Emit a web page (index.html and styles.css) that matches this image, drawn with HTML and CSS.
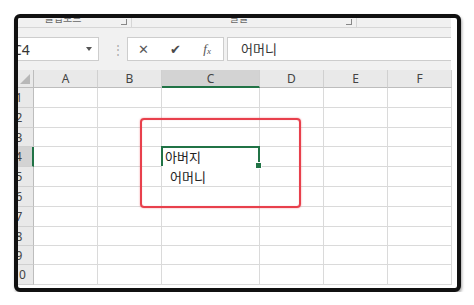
FILE: index.html
```html
<!doctype html>
<html lang="ko">
<head>
    <meta charset="UTF-8">
    <title>엑셀</title>
    <link rel="stylesheet" href="styles.css">
</head>
<body>
<div class="frame">
    <div class="screen">
        <div class="groups">
            <div class="group g1"><span class="group-name">클립보드</span><i class="launcher"></i></div>
            <div class="group g2"><span class="group-name">글꼴</span><i class="launcher"></i></div>
            <div class="group g3"></div>
        </div>
        <div class="fbar">
            <div class="namebox"><span>C4</span><i class="caret"></i></div>
            <div class="dots">⋮</div>
            <div class="fxbox">
                <span class="fbtn cancel">✕</span>
                <span class="fbtn enter">✔</span>
                <span class="fbtn fx">f<sub>x</sub></span>
            </div>
            <div class="finput">어머니</div>
        </div>
        <div class="sheet">
            <div class="hd corner"><i class="tri"></i></div>
            <div class="hd col">A</div>
            <div class="hd col">B</div>
            <div class="hd col on">C</div>
            <div class="hd col">D</div>
            <div class="hd col">E</div>
            <div class="hd col">F</div>

            <div class="hd row">1</div><div class="c"></div><div class="c"></div><div class="c"></div><div class="c"></div><div class="c"></div><div class="c"></div>
            <div class="hd row">2</div><div class="c"></div><div class="c"></div><div class="c"></div><div class="c"></div><div class="c"></div><div class="c"></div>
            <div class="hd row">3</div><div class="c"></div><div class="c"></div><div class="c"></div><div class="c"></div><div class="c"></div><div class="c"></div>
            <div class="hd row on">4</div><div class="c"></div><div class="c"></div><div class="c active">아버지</div><div class="c"></div><div class="c"></div><div class="c"></div>
            <div class="hd row">5</div><div class="c"></div><div class="c"></div><div class="c indent">어머니</div><div class="c"></div><div class="c"></div><div class="c"></div>
            <div class="hd row">6</div><div class="c"></div><div class="c"></div><div class="c"></div><div class="c"></div><div class="c"></div><div class="c"></div>
            <div class="hd row">7</div><div class="c"></div><div class="c"></div><div class="c"></div><div class="c"></div><div class="c"></div><div class="c"></div>
            <div class="hd row">8</div><div class="c"></div><div class="c"></div><div class="c"></div><div class="c"></div><div class="c"></div><div class="c"></div>
            <div class="hd row">9</div><div class="c"></div><div class="c"></div><div class="c"></div><div class="c"></div><div class="c"></div><div class="c"></div>
            <div class="hd row">10</div><div class="c"></div><div class="c"></div><div class="c"></div><div class="c"></div><div class="c"></div><div class="c"></div>
        </div>
    </div>
    <div class="mark"></div>
</div>
</body>
</html>
```

FILE: styles.css
```css
*{
    margin: 0;
    padding: 0;
    box-sizing: border-box;
}

body{
    background-color: #fff;
    font-family: "Noto Sans", "Noto Sans CJK KR", sans-serif;
    color: #333;
}

.frame{
    position: relative;
    width: 447px;
    height: 278px;
    margin: 14px 0 0 14px;
    border: 4px solid #111;
    border-radius: 6px;
    box-shadow: 1px 2px 3px rgba(0,0,0,.35);
    background-color: #fff;
    overflow: hidden;
}
.screen{
    width: 446px;
    margin-left: -13px;
}

/* 리본 그룹 이름 줄 */
.groups{
    display: flex;
    height: 15px;
    margin-top: -5px;
    background-color: #f1f1f1;
    border-bottom: 1px solid #d6d6d6;
}
.group{
    display: flex;
    align-items: center;
    border-right: 1px solid #d6d6d6;
}
.g1{ width: 127px; }
.g2{ width: 225px; }
.g3{ flex: 1; border-right: 0; }
.group-name{
    flex: 1;
    margin-top: -5px;
    text-align: center;
    font-family: "Noto Sans CJK KR", sans-serif;
    font-size: 10px;
    color: #666;
}
.launcher{
    width: 6px;
    height: 6px;
    margin: 4px 4px 0 0;
    border-right: 1px solid #888;
    border-bottom: 1px solid #888;
}

/* 수식 입력줄 */
.fbar{
    display: flex;
    align-items: center;
    height: 42px;
    background-color: #f1f1f1;
}
.namebox{
    display: flex;
    align-items: center;
    justify-content: space-between;
    width: 94px;
    height: 24px;
    padding: 0 6px 0 7px;
    background-color: #fff;
    border: 1px solid #cdcdcd;
    font-size: 14px;
    color: #333;
}
.caret{
    border-left: 3px solid transparent;
    border-right: 3px solid transparent;
    border-top: 4px solid #555;
}
.dots{
    width: 4px;
    margin-left: 13px;
    font-size: 12px;
    color: #aaa;
    text-align: center;
}
.fxbox{
    display: flex;
    width: 97px;
    height: 24px;
    margin-left: 11px;
    background-color: #fff;
    border: 1px solid #cdcdcd;
}
.fbtn{
    flex: 1;
    text-align: center;
    line-height: 22px;
    color: #5a5a5a;
}
.cancel{ font-size: 13px; }
.enter{ font-size: 13px; color: #4a4a4a; }
.fx{
    font-family: "Liberation Serif", serif;
    font-style: italic;
    font-size: 13px;
    color: #555;
}
.fx sub{
    font-size: 9px;
    vertical-align: -1px;
}
.finput{
    flex: 1;
    height: 24px;
    margin-left: 3px;
    padding-left: 13px;
    background-color: #fff;
    border: 1px solid #cdcdcd;
    border-right: 0;
    font-family: "Noto Sans CJK KR", sans-serif;
    font-size: 13px;
    line-height: 22px;
    color: #333;
}

/* 시트 */
.sheet{
    display: grid;
    grid-template-columns: 29px 64px 64px 98px 64px 64px 64px;
    grid-template-rows: 18px 20px 20px 19px 20px 20px 20px 20px 19px 19px 20px;
}
.c{
    border-right: 1px solid #dadada;
    border-bottom: 1px solid #dadada;
    font-family: "Noto Sans CJK KR", sans-serif;
    font-size: 13px;
    line-height: 19px;
    color: #222;
    padding-left: 3px;
    white-space: nowrap;
}
.hd{
    background-color: #e9e9e9;
    border-right: 1px solid #d0d0d0;
    border-bottom: 1px solid #d0d0d0;
    font-size: 12px;
    color: #444;
    text-align: center;
}
.col{
    line-height: 17px;
    border-bottom-color: #bdbdbd;
}
.row{
    line-height: 19px;
    border-right-color: #bdbdbd;
}
.col.on{
    background-color: #d3d3d3;
    border-bottom: 2px solid #217346;
}
.row.on{
    background-color: #d3d3d3;
    border-right: 2px solid #217346;
}
.corner{
    display: flex;
    justify-content: flex-end;
    align-items: flex-end;
    padding: 0 3px 3px 0;
    border-bottom-color: #bdbdbd;
    border-right-color: #bdbdbd;
}
.tri{
    width: 0;
    height: 0;
    border-left: 10px solid transparent;
    border-bottom: 10px solid #b8b8b8;
}

.active{
    position: relative;
    border-bottom-color: #fff;
}
.active::after{
    content: "";
    position: absolute;
    top: -1px;
    left: -1px;
    right: -1px;
    bottom: 0;
    border: 2px solid #217346;
    border-bottom: 0;
}
.active::before{
    content: "";
    position: absolute;
    right: -3px;
    bottom: -3px;
    width: 5px;
    height: 5px;
    background-color: #217346;
    border: 1px solid #fff;
    z-index: 1;
}
.indent{
    padding-left: 8px;
}

/* 빨간 강조 표시 */
.mark{
    position: absolute;
    left: 122px;
    top: 100px;
    width: 161px;
    height: 90px;
    border: 2px solid #e8404c;
    border-radius: 4px;
    box-shadow: 0 0 2px rgba(236,70,85,.6), inset 0 0 1px rgba(236,70,85,.5);
}
```
